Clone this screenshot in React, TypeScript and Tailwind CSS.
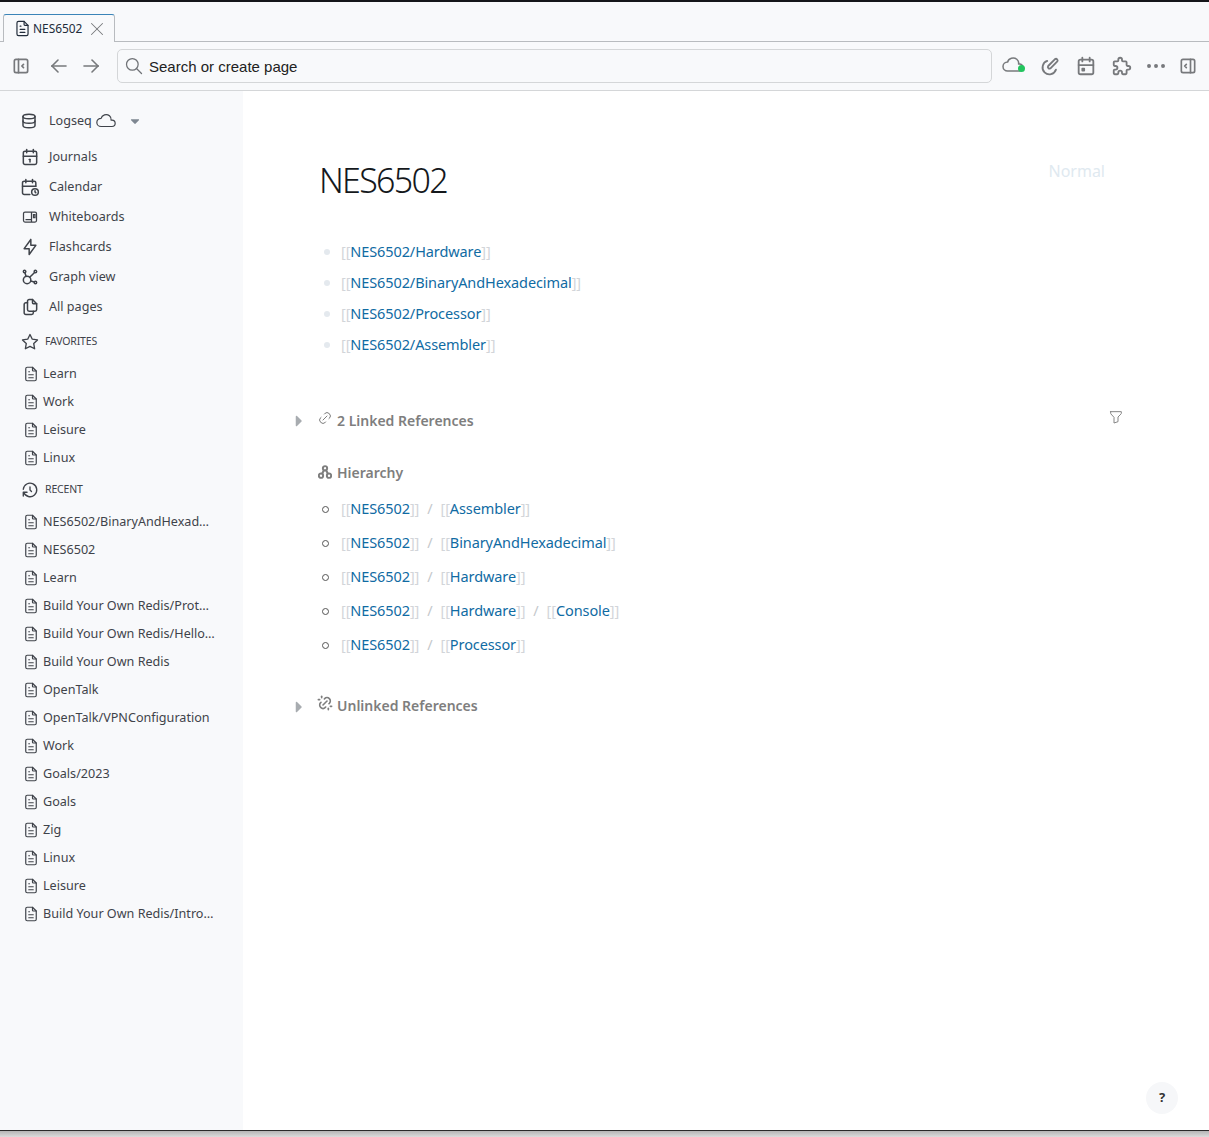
import type { ReactNode } from "react";
import {
  TbAffiliate,
  TbArrowLeft,
  TbArrowRight,
  TbBolt,
  TbCalendar,
  TbCalendarTime,
  TbCaretDownFilled,
  TbCaretRightFilled,
  TbCloud,
  TbDatabase,
  TbDots,
  TbFileText,
  TbFiles,
  TbFilter,
  TbHistory,
  TbLayoutSidebarLeftCollapse,
  TbLayoutSidebarRightExpand,
  TbLink,
  TbPuzzle,
  TbSearch,
  TbStar,
  TbUnlink,
  TbX,
} from "react-icons/tb";

const favorites = ["Learn", "Work", "Leisure", "Linux"];
const recent = [
  "NES6502/BinaryAndHexad…",
  "NES6502",
  "Learn",
  "Build Your Own Redis/Prot…",
  "Build Your Own Redis/Hello…",
  "Build Your Own Redis",
  "OpenTalk",
  "OpenTalk/VPNConfiguration",
  "Work",
  "Goals/2023",
  "Goals",
  "Zig",
  "Linux",
  "Leisure",
  "Build Your Own Redis/Intro…",
];

function WhiteboardIcon() {
  return (
    <svg width="16" height="16" viewBox="0 0 16 16" fill="none" stroke="currentColor" strokeWidth="1.25" className="ml-[2px]">
      <rect x="1.5" y="3" width="13" height="10" rx="1.5" />
      <path d="M3.5 10.5H9.5V3M11.5 5.5h1.5v3h-1.5zM9.5 10.5V13" />
    </svg>
  );
}

function AssetsIcon() {
  return (
    <svg width="22" height="22" viewBox="0 0 24 24" fill="none" stroke="currentColor" strokeWidth="2" strokeLinecap="round" strokeLinejoin="round" className="ml-[14px]">
      <path d="M17.5 4.5a1.8 1.8 0 0 1 2.5 2.5l-7.5 7.5a1.8 1.8 0 0 1-2.5-2.5z" />
      <path d="M9 6.5a7.5 7.5 0 1 0 9.5 9.5" />
    </svg>
  );
}

function ToolbarCalendarIcon() {
  return (
    <svg width="22" height="22" viewBox="0 0 24 24" fill="none" stroke="currentColor" strokeWidth="2" strokeLinecap="round" strokeLinejoin="round" className="ml-[14px]">
      <rect x="4" y="5" width="16" height="16" rx="2" />
      <path d="M16 3v4M8 3v4M4 11h16" />
      <rect x="8" y="15" width="2" height="2" fill="currentColor" />
    </svg>
  );
}

function HierarchyIcon() {
  return (
    <svg width="14" height="14" viewBox="0 0 15 15" fill="none" stroke="currentColor" strokeWidth="2.1" className="mt-[-1px] mr-[5px]">
      <circle cx="7.5" cy="3.5" r="2.3" />
      <circle cx="3.2" cy="11.5" r="2.3" />
      <circle cx="11.8" cy="11.5" r="2.3" />
      <path d="M6.3 5.6L4.4 9.4M8.7 5.6l1.9 3.8" />
    </svg>
  );
}

function NavItem({ icon, label }: { icon: ReactNode; label: string }) {
  return (
    <div className="flex h-[30px] items-center pl-5 text-[12.6px] text-[#3f434a]">
      <span className="flex w-[29px]">{icon}</span>
      <span>{label}</span>
    </div>
  );
}

function PageItem({ label }: { label: string }) {
  return (
    <div className="flex h-7 items-center pl-[22px] text-[12.6px] whitespace-nowrap text-[#3f434a]">
      <TbFileText size={18} className="mr-[3px] shrink-0" strokeWidth={1.6} />
      <span>{label}</span>
    </div>
  );
}

function SectionLabel({ icon, label }: { icon: ReactNode; label: string }) {
  return (
    <div className="flex h-9 items-center pl-[21px] text-[10.5px] tracking-[-0.15px] text-[#3f434a]">
      <span className="flex w-6">{icon}</span>
      <span>{label}</span>
    </div>
  );
}

function PageRef({ name }: { name: string }) {
  return (
    <span>
      <span className="text-[#d2d5d9]">[[</span>
      <span className="text-[#106ba3]">{name}</span>
      <span className="text-[#d2d5d9]">]]</span>
    </span>
  );
}

function HierarchyRow({ parts }: { parts: string[] }) {
  return (
    <li className="flex h-[34px] items-center">
      <span className="mr-3 ml-[5px] size-[7px] rounded-full border-[1.5px] border-[#555]" />
      {parts.map((p, i) => (
        <span key={i}>
          {i > 0 && <span className="mx-2 text-[#c4c8cc]">/</span>}
          <PageRef name={p} />
        </span>
      ))}
    </li>
  );
}

export default function App() {
  return (
    <div className="flex h-[1137px] w-[1209px] flex-col overflow-hidden bg-[#f8f9fb] font-['Noto_Sans',sans-serif]">
      <div className="h-[2px] bg-[#15161a]" />

      {/* Tab bar */}
      <div className="flex h-10 items-end border-b border-[#b8bbbf] pl-[3px]">
        <div className="-mb-px flex h-[28px] w-[112px] items-center rounded-t-[3px] border border-b-0 border-[#b8bbbf] border-t-[#3a84b8] bg-[#f8f9fb] pl-[9px] text-[11.9px] text-[#222c3a]">
          <TbFileText size={19} className="mr-px shrink-0" strokeWidth={1.5} />
          <span>NES6502</span>
          <TbX size={22} className="ml-1 shrink-0 text-[#77797c]" strokeWidth={1.1} />
        </div>
      </div>

      {/* Toolbar */}
      <div className="flex h-[49px] items-center border-b border-[#d4d6d8] pl-[11px] text-[#77797c]">
        <TbLayoutSidebarLeftCollapse size={20} />
        <TbArrowLeft size={24} strokeWidth={1.6} className="ml-4" />
        <TbArrowRight size={24} strokeWidth={1.6} className="ml-2" />
        <div className="ml-[14px] flex h-[34px] w-[875px] items-center rounded-[5px] border border-[#d4d6d8] pl-[6px] font-['Liberation_Sans',sans-serif] text-[15px] text-[#222]">
          <TbSearch size={20} className="mr-[5px] text-[#6f7276]" strokeWidth={1.5} />
          <span className="pt-[2px]">Search or create page</span>
        </div>
        <div className="relative -mt-[2px] ml-[9px] flex w-6">
          <TbCloud size={24} strokeWidth={1.5} />
          <span className="absolute top-[12px] right-0 size-[7px] rounded-full bg-[#22c55e]" />
        </div>
        <AssetsIcon />
        <ToolbarCalendarIcon />
        <TbPuzzle size={22} className="ml-[14px]" />
        <TbDots size={24} className="ml-[11px]" />
        <TbLayoutSidebarRightExpand size={20} className="ml-[10px]" />
      </div>

      <div className="flex min-h-0 flex-1">
        {/* Sidebar */}
        <aside className="w-[243px] shrink-0 pt-[15px]">
          <div className="flex h-[30px] items-center pl-5 text-[12.6px] text-[#3f434a]">
            <span className="flex w-[29px]">
              <TbDatabase size={18} />
            </span>
            <span>Logseq</span>
            <TbCloud size={22} strokeWidth={1.3} className="ml-[3px]" />
            <TbCaretDownFilled size={14} className="ml-[11px] text-[#7e8791]" />
          </div>
          <div className="h-[6px]" />
          <NavItem icon={<TbCalendar size={20} strokeWidth={1.8} />} label="Journals" />
          <NavItem icon={<TbCalendarTime size={20} strokeWidth={1.8} />} label="Calendar" />
          <NavItem icon={<WhiteboardIcon />} label="Whiteboards" />
          <NavItem icon={<TbBolt size={20} strokeWidth={1.8} />} label="Flashcards" />
          <NavItem icon={<TbAffiliate size={20} strokeWidth={1.8} />} label="Graph view" />
          <NavItem icon={<TbFiles size={20} strokeWidth={1.8} />} label="All pages" />
          <div className="h-[2px]" />
          <SectionLabel icon={<TbStar size={18} strokeWidth={1.8} />} label="FAVORITES" />
          {favorites.map((f) => (
            <PageItem key={f} label={f} />
          ))}
          <SectionLabel icon={<TbHistory size={18} strokeWidth={1.8} />} label="RECENT" />
          {recent.map((r, i) => (
            <PageItem key={i} label={r} />
          ))}
        </aside>

        {/* Main */}
        <main className="relative flex-1 bg-white pt-[52px] pr-[85px] pl-[55px] text-[14.5px] tracking-[-0.1px]">
          <div className="flex items-start justify-between pl-[21px]">
            <h1 className="text-[34px] leading-[74px] font-light tracking-[-1.7px] text-[#14181c]">NES6502</h1>
            <span className="mt-4 mr-[19px] text-[16px] tracking-normal text-[#e0e9f0]">Normal</span>
          </div>

          <ul className="mt-[19px] pl-[26px]">
            {["NES6502/Hardware", "NES6502/BinaryAndHexadecimal", "NES6502/Processor", "NES6502/Assembler"].map((b) => (
              <li key={b} className="flex h-[31px] items-center">
                <span className="mr-[11px] size-[6px] rounded-full bg-[#e4e9ee]" />
                <PageRef name={b} />
              </li>
            ))}
          </ul>

          <div className="mt-[45px] flex h-[30px] items-center text-[14px] font-semibold tracking-normal text-[#7e7e7e]">
            <TbCaretRightFilled size={18} className="mt-[2px] mr-[10px] -ml-[9px] text-[#a8acb0]" />
            <TbLink size={16} className="mt-[-4px] mr-1" strokeWidth={1.5} />
            <span className="flex-1">2 Linked References</span>
            <TbFilter size={16} strokeWidth={1.4} className="mt-[-7px]" />
          </div>

          <div className="mt-[22px] flex h-[30px] items-center pl-5 text-[14px] font-semibold tracking-normal text-[#7e7e7e]">
            <HierarchyIcon />
            <span>Hierarchy</span>
          </div>

          <ul className="mt-[5px] pl-[19px]">
            <HierarchyRow parts={["NES6502", "Assembler"]} />
            <HierarchyRow parts={["NES6502", "BinaryAndHexadecimal"]} />
            <HierarchyRow parts={["NES6502", "Hardware"]} />
            <HierarchyRow parts={["NES6502", "Hardware", "Console"]} />
            <HierarchyRow parts={["NES6502", "Processor"]} />
          </ul>

          <div className="mt-[28px] flex h-[30px] items-center text-[14px] font-semibold tracking-normal text-[#7e7e7e]">
            <TbCaretRightFilled size={18} className="mt-[4px] mr-[10px] -ml-[9px] text-[#a8acb0]" />
            <TbUnlink size={16} className="mt-[-4px] mr-1" strokeWidth={2.4} />
            <span>Unlinked References</span>
          </div>

          <button className="absolute right-[31px] bottom-4 flex size-8 items-center justify-center rounded-full bg-[#f6f7f9] text-[13px] font-bold text-[#333]">
            ?
          </button>
        </main>
      </div>

      {/* Window edge */}
      <div className="h-[7px] border-t border-[#2a2a2a] bg-gradient-to-b from-[#b5b5b5] to-[#dcdcdc]" />
    </div>
  );
}
